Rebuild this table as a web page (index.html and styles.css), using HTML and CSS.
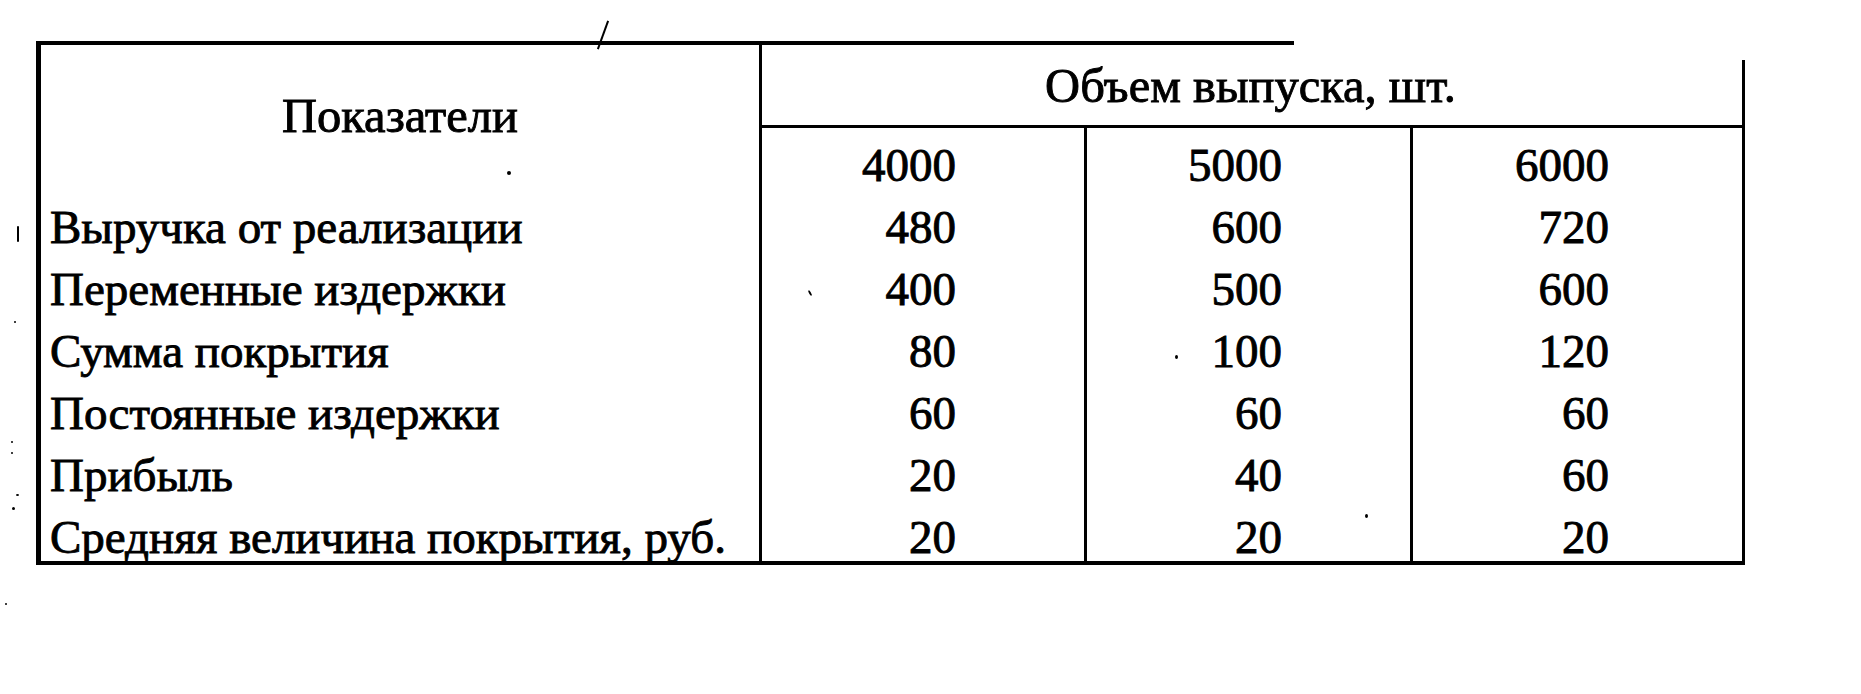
FILE: index.html
```html
<!DOCTYPE html>
<html lang="ru">
<head>
<meta charset="utf-8">
<title>Объем выпуска</title>
<link rel="stylesheet" href="styles.css">
</head>
<body>
<div class="page">
  <div class="topline"></div>
  <div class="grid">
    <div class="cell head-label">Показатели</div>
    <div class="cell head-group">Объем выпуска, шт.</div>
    <div class="cell num sub c2">4000</div>
    <div class="cell num sub c3">5000</div>
    <div class="cell num sub c4">6000</div>

    <div class="cell name">Выручка от реализации</div>
    <div class="cell num c2">480</div>
    <div class="cell num c3">600</div>
    <div class="cell num c4">720</div>

    <div class="cell name">Переменные издержки</div>
    <div class="cell num c2">400</div>
    <div class="cell num c3">500</div>
    <div class="cell num c4">600</div>

    <div class="cell name">Сумма покрытия</div>
    <div class="cell num c2">80</div>
    <div class="cell num c3">100</div>
    <div class="cell num c4">120</div>

    <div class="cell name">Постоянные издержки</div>
    <div class="cell num c2">60</div>
    <div class="cell num c3">60</div>
    <div class="cell num c4">60</div>

    <div class="cell name">Прибыль</div>
    <div class="cell num c2">20</div>
    <div class="cell num c3">40</div>
    <div class="cell num c4">60</div>

    <div class="cell name">Средняя величина покрытия, руб.</div>
    <div class="cell num c2">20</div>
    <div class="cell num c3">20</div>
    <div class="cell num c4">20</div>
  </div>

  <span class="tick"></span>
  <span class="speck s1"></span>
  <span class="speck s2"></span>
  <span class="speck s3"></span>
  <span class="speck s4"></span>
  <span class="speck s5"></span>
  <span class="speck s6"></span>
  <span class="speck s7"></span>
  <span class="speck s8"></span>
  <span class="speck s9"></span>
  <span class="speck s10"></span>
  <span class="speck s11"></span>
</div>
</body>
</html>
```

FILE: styles.css
```css
html, body {
  margin: 0;
  padding: 0;
  background: #ffffff;
}

body {
  font-family: "Liberation Serif", "Times New Roman", serif;
  color: #000;
}

.page {
  position: relative;
  width: 1861px;
  height: 694px;
  padding-top: 41px;
  box-sizing: border-box;
}

.topline {
  margin-left: 36px;
  width: 1258px;
  height: 4px;
  background: #000;
}

.grid {
  margin-left: 36px;
  display: grid;
  grid-template-columns: 721px 325px 326px 332px;
  grid-template-rows: 83px 68px 62px 62px 62px 62px 62px 55px;
  border-left: 5px solid #000;
  border-bottom: 4px solid #000;
  width: max-content;
}

.cell {
  box-sizing: border-box;
  font-size: 47px;
  -webkit-text-stroke: 0.9px #000;
  white-space: nowrap;
}

.head-label {
  grid-row: 1 / span 2;
  border-right: 3px solid #000;
  display: flex;
  align-items: center;
  justify-content: center;
  padding-bottom: 10px;
  font-size: 48.5px;
}

.head-group {
  grid-column: 2 / span 3;
  border-bottom: 3px solid #000;
  display: flex;
  align-items: center;
  justify-content: center;
  padding-right: 6px;
  font-size: 48.5px;
  background: linear-gradient(#000, #000) right 15px / 3px calc(100% - 15px) no-repeat;
}

.name {
  border-right: 3px solid #000;
  padding-left: 9px;
  line-height: 62px;
}

.num {
  text-align: right;
  line-height: 62px;
  border-right: 3px solid #000;
}

.sub {
  line-height: 68px;
  padding-top: 3px;
}

.c2, .c3 {
  padding-right: 128px;
}

.c4 {
  padding-right: 133px;
}

.tick {
  position: absolute;
  left: 602px;
  top: 20px;
  width: 2px;
  height: 30px;
  background: #000;
  transform: rotate(20deg);
}

.speck {
  position: absolute;
  width: 3px;
  height: 3px;
  background: #000;
  border-radius: 50%;
}

.s1 { left: 507px; top: 171px; width: 4px; height: 4px; }
.s2 { left: 17px; top: 226px; width: 2px; height: 16px; border-radius: 1px; }
.s3 { left: 14px; top: 321px; width: 2px; height: 2px; }
.s4 { left: 11px; top: 441px; width: 2px; height: 2px; }
.s5 { left: 11px; top: 452px; width: 2px; height: 2px; }
.s6 { left: 16px; top: 494px; width: 3px; height: 2px; }
.s7 { left: 12px; top: 507px; width: 3px; height: 3px; }
.s8 { left: 5px; top: 603px; width: 2px; height: 2px; }
.s9 { left: 809px; top: 290px; width: 2px; height: 6px; transform: rotate(-30deg); }
.s10 { left: 1175px; top: 355px; width: 3px; height: 4px; }
.s11 { left: 1365px; top: 514px; width: 3px; height: 4px; }
```
